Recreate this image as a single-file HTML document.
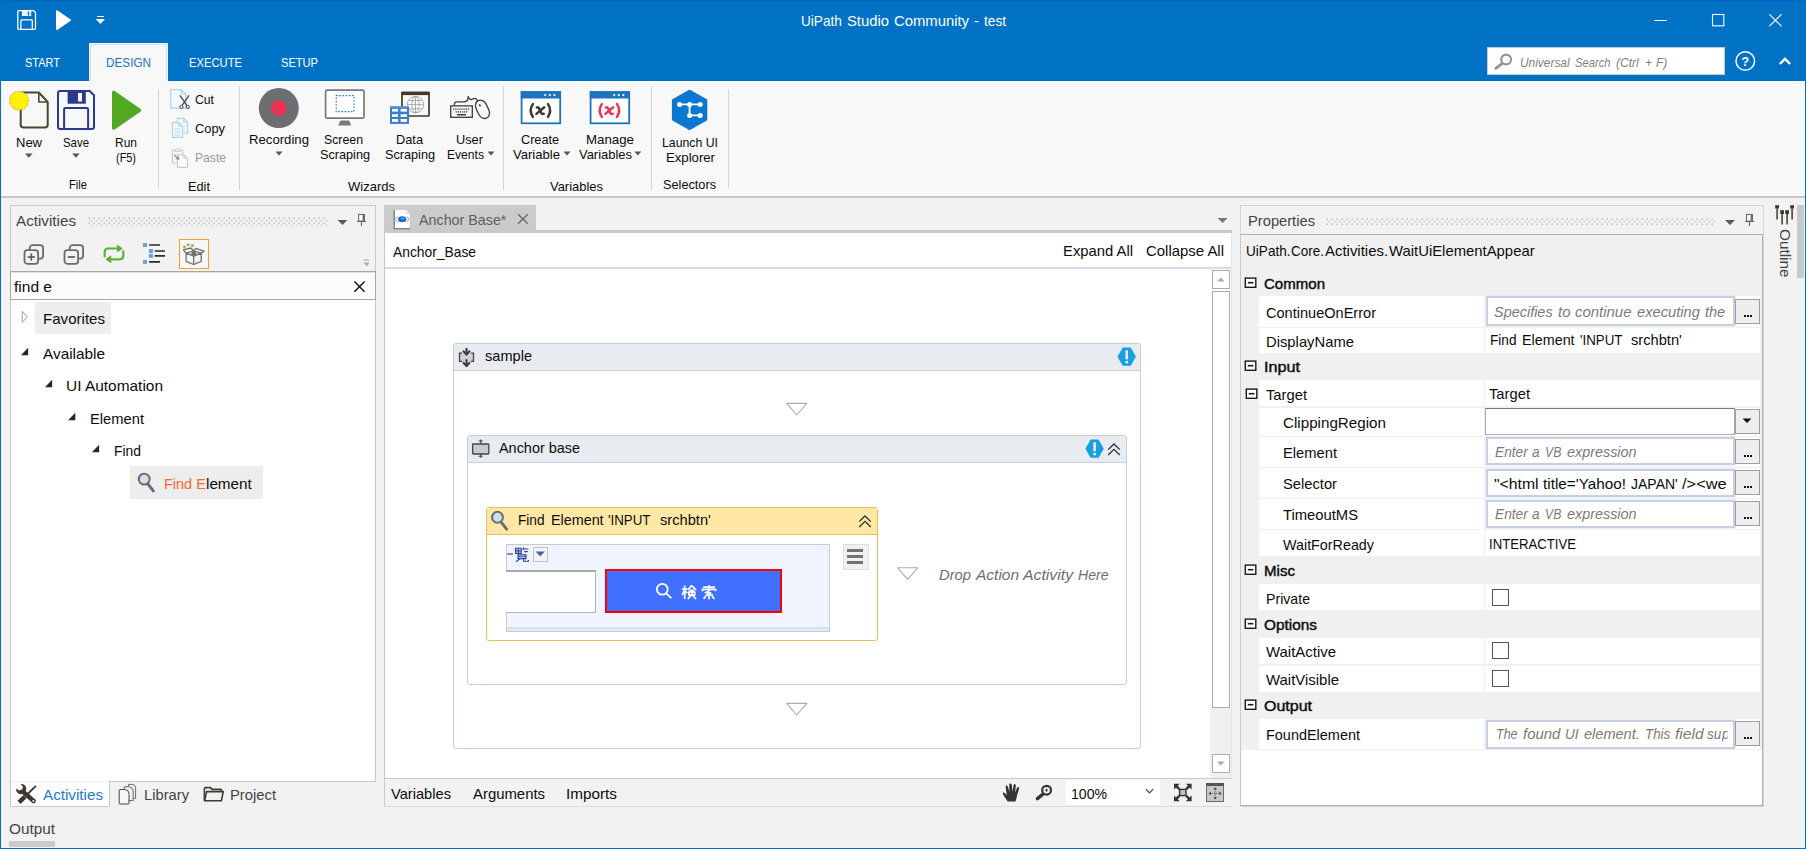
<!DOCTYPE html>
<html><head><meta charset="utf-8"><title>UiPath Studio Community - test</title>
<style>
html,body{margin:0;padding:0;background:#F2F2F2;}
body{width:1806px;height:849px;position:relative;overflow:hidden;font-family:"Liberation Sans",sans-serif;}
#r div{position:absolute;}
#r svg{position:absolute;overflow:visible;}
.t{position:absolute;white-space:pre;line-height:1;transform-origin:0 0;}
</style></head>
<body><div id="r">
<div style="left:0px;top:0px;width:1806px;height:849px;background:#F2F2F2"></div>
<div style="left:0px;top:0px;width:1806px;height:81px;background:#0072C6"></div>
<div style="left:0px;top:0px;width:1806px;height:1px;background:#0067B6"></div>
<div style="left:1px;top:81px;width:1804px;height:115px;background:#F8F8F8"></div>
<div style="left:1px;top:196px;width:1804px;height:2px;background:#C4C6C8"></div>
<div style="left:89px;top:43px;width:79px;height:38px;background:#F8F8F8;border:1px solid #F4F8FC;border-bottom:none;box-sizing:border-box;box-shadow:inset 1px 1px 0 #CFE0F0, inset -1px 0 0 #CFE0F0"></div>
<div style="left:0px;top:0px;width:1px;height:849px;background:#0072C6"></div>
<div style="left:1805px;top:0px;width:1px;height:849px;background:#0072C6"></div>
<div style="left:0px;top:848px;width:1806px;height:1px;background:#0072C6"></div>
<div style="left:1487px;top:47px;width:238px;height:28px;background:#fff;border:1px solid #C8C8C8;box-sizing:border-box"></div>
<div style="left:158px;top:89px;width:1px;height:99px;background:#D4D4D4"></div>
<div style="left:239px;top:86px;width:1px;height:104px;background:#D4D4D4"></div>
<div style="left:503px;top:86px;width:1px;height:104px;background:#D4D4D4"></div>
<div style="left:651px;top:86px;width:1px;height:104px;background:#D4D4D4"></div>
<div style="left:728px;top:89px;width:1px;height:99px;background:#D4D4D4"></div>
<div style="left:10px;top:205px;width:366px;height:577px;background:#F2F2F2;border:1px solid #C9C9C9;box-sizing:border-box"></div>
<div style="left:11px;top:300px;width:364px;height:481px;background:#fff"></div>
<div style="left:10px;top:271px;width:366px;height:29px;background:#FCFCFC;border:1px solid #A6A6A6;box-sizing:border-box;box-shadow:inset 0 0.5px 0 #C4C4C4"></div>
<div style="left:35px;top:302px;width:76px;height:32px;background:#EEEEEE"></div>
<div style="left:130px;top:466px;width:133px;height:33px;background:#EDEDED"></div>
<div style="left:179px;top:239px;width:30px;height:30px;background:#F6F6F6;border:1px solid #F0A030;box-sizing:border-box"></div>
<div style="left:10px;top:782px;width:100px;height:25px;background:#fff;border:1px solid #C9C9C9;border-top:none;box-sizing:border-box"></div>
<div style="left:11px;top:781px;width:98px;height:1px;background:#F0F0F0"></div>
<div style="left:9px;top:841px;width:46px;height:6px;background:#CCCCCC"></div>
<div style="left:384px;top:205px;width:152px;height:26px;background:#CBCBCB"></div>
<div style="left:384px;top:230px;width:848px;height:3px;background:#C9C9C9"></div>
<div style="left:384px;top:233px;width:848px;height:546px;background:#fff;border-left:1px solid #C9C9C9;border-right:1px solid #E4E4E4;box-sizing:border-box"></div>
<div style="left:385px;top:267px;width:846px;height:2px;background:#D5DDEB"></div>
<div style="left:1210px;top:708px;width:21px;height:70px;background:#F0F0F0"></div>
<div style="left:1212px;top:270px;width:18px;height:19px;background:#fff;border:1px solid #ABABAB;box-sizing:border-box"></div>
<div style="left:1212px;top:291px;width:18px;height:417px;background:#fff;border:1px solid #ABABAB;box-sizing:border-box"></div>
<div style="left:1212px;top:754px;width:18px;height:19px;background:#fff;border:1px solid #ABABAB;box-sizing:border-box"></div>
<div style="left:384px;top:778px;width:848px;height:29px;background:#F2F2F2;border-top:1px solid #C9C9C9;border-left:1px solid #C9C9C9;border-bottom:1px solid #DADADA;box-sizing:border-box"></div>
<div style="left:1066px;top:780px;width:94px;height:25px;background:#fff"></div>
<div style="left:1206px;top:783px;width:18px;height:19px;background:#C8C8C8;border:1px solid #6A6A6A;box-sizing:border-box"></div>
<div style="left:453px;top:343px;width:688px;height:406px;background:#fff;border:1px solid #C6CFDF;border-radius:3px;box-sizing:border-box"></div>
<div style="left:454px;top:344px;width:686px;height:27px;background:#E8EBEF;border-bottom:1px solid #C6CFDF;box-sizing:border-box;border-radius:2px 2px 0 0"></div>
<div style="left:467px;top:435px;width:660px;height:250px;background:#fff;border:1px solid #C6CFDF;border-radius:3px;box-sizing:border-box"></div>
<div style="left:468px;top:436px;width:658px;height:27px;background:#E8EBEF;border-bottom:1px solid #C6CFDF;box-sizing:border-box;border-radius:2px 2px 0 0"></div>
<div style="left:486px;top:507px;width:392px;height:134px;background:#fff;border:1px solid #E9BE5C;border-radius:3px;box-sizing:border-box"></div>
<div style="left:487px;top:508px;width:390px;height:27px;background:#FFE8A6;border-bottom:1px solid #E9BE5C;box-sizing:border-box;border-radius:2px 2px 0 0"></div>
<div style="left:506px;top:544px;width:324px;height:88px;background:#F0F4FF;border:1px solid #C9C9C9;box-sizing:border-box"></div>
<div style="left:507px;top:627px;width:322px;height:4px;background:linear-gradient(#D4DEF4,#E6ECFA)"></div>
<div style="left:506px;top:570px;width:90px;height:43px;background:#fff;border:1px solid #B4B4B4;border-left:none;border-top:2px solid #A8A8A8;box-sizing:border-box"></div>
<div style="left:605px;top:569px;width:177px;height:44px;background:#4070FF;border:2px solid #FF0000;box-sizing:border-box"></div>
<div style="left:533px;top:547px;width:15px;height:15px;background:#F4F4F4;border:1px solid #C0C0C0;box-sizing:border-box"></div>
<div style="left:843px;top:544px;width:26px;height:26px;background:#F0F0F0;border:1px solid #DEDEDE;box-sizing:border-box"></div>
<div style="left:847px;top:549px;width:16px;height:3px;background:#727272"></div>
<div style="left:847px;top:555px;width:16px;height:3px;background:#727272"></div>
<div style="left:847px;top:561px;width:16px;height:3px;background:#727272"></div>
<div style="left:1240px;top:205px;width:524px;height:602px;background:#F2F2F2;border:1px solid #D4D4D4;box-sizing:border-box"></div>
<div style="left:1240px;top:234px;width:523px;height:572px;background:#F0F0F0;border:1px solid #B2B2B2;border-left-color:#C9C9C9;box-sizing:border-box"></div>
<div style="left:1241px;top:750px;width:521px;height:55px;background:#fff"></div>
<div style="left:1259px;top:296px;width:225px;height:31px;background:#fff"></div>
<div style="left:1485px;top:296px;width:275px;height:31px;background:#fff"></div>
<div style="left:1259px;top:328px;width:225px;height:25px;background:#fff"></div>
<div style="left:1485px;top:328px;width:275px;height:25px;background:#fff"></div>
<div style="left:1259px;top:380px;width:225px;height:26px;background:#fff"></div>
<div style="left:1485px;top:380px;width:275px;height:26px;background:#fff"></div>
<div style="left:1259px;top:408px;width:225px;height:28px;background:#fff"></div>
<div style="left:1485px;top:408px;width:275px;height:28px;background:#fff"></div>
<div style="left:1259px;top:437px;width:225px;height:30px;background:#fff"></div>
<div style="left:1485px;top:437px;width:275px;height:30px;background:#fff"></div>
<div style="left:1259px;top:468px;width:225px;height:30px;background:#fff"></div>
<div style="left:1485px;top:468px;width:275px;height:30px;background:#fff"></div>
<div style="left:1259px;top:499px;width:225px;height:30px;background:#fff"></div>
<div style="left:1485px;top:499px;width:275px;height:30px;background:#fff"></div>
<div style="left:1259px;top:530px;width:225px;height:26px;background:#fff"></div>
<div style="left:1485px;top:530px;width:275px;height:26px;background:#fff"></div>
<div style="left:1259px;top:584px;width:225px;height:26px;background:#fff"></div>
<div style="left:1485px;top:584px;width:275px;height:26px;background:#fff"></div>
<div style="left:1259px;top:638px;width:225px;height:26px;background:#fff"></div>
<div style="left:1485px;top:638px;width:275px;height:26px;background:#fff"></div>
<div style="left:1259px;top:666px;width:225px;height:26px;background:#fff"></div>
<div style="left:1485px;top:666px;width:275px;height:26px;background:#fff"></div>
<div style="left:1259px;top:719px;width:225px;height:30px;background:#fff"></div>
<div style="left:1485px;top:719px;width:275px;height:30px;background:#fff"></div>
<div style="left:1486px;top:296px;width:249px;height:30px;background:#fff;border:2px solid #C6D0E3;box-sizing:border-box;box-shadow:0 0 0 0.5px #DDE3EF"></div>
<div style="left:1735px;top:299px;width:25px;height:25px;background:#EEEEEE;border:1px solid #9E9E9E;box-sizing:border-box"></div>
<div style="left:1743.6px;top:314.6px;width:2.2px;height:2.2px;background:#111"></div>
<div style="left:1746.8px;top:314.6px;width:2.2px;height:2.2px;background:#111"></div>
<div style="left:1750.0px;top:314.6px;width:2.2px;height:2.2px;background:#111"></div>
<div style="left:1486px;top:437px;width:249px;height:28px;background:#fff;border:2px solid #C6D0E3;box-sizing:border-box;box-shadow:0 0 0 0.5px #DDE3EF"></div>
<div style="left:1735px;top:439px;width:25px;height:25px;background:#EEEEEE;border:1px solid #9E9E9E;box-sizing:border-box"></div>
<div style="left:1743.6px;top:454.6px;width:2.2px;height:2.2px;background:#111"></div>
<div style="left:1746.8px;top:454.6px;width:2.2px;height:2.2px;background:#111"></div>
<div style="left:1750.0px;top:454.6px;width:2.2px;height:2.2px;background:#111"></div>
<div style="left:1486px;top:469px;width:249px;height:28px;background:#fff;border:2px solid #C6D0E3;box-sizing:border-box;box-shadow:0 0 0 0.5px #DDE3EF"></div>
<div style="left:1735px;top:470px;width:25px;height:25px;background:#EEEEEE;border:1px solid #9E9E9E;box-sizing:border-box"></div>
<div style="left:1743.6px;top:485.6px;width:2.2px;height:2.2px;background:#111"></div>
<div style="left:1746.8px;top:485.6px;width:2.2px;height:2.2px;background:#111"></div>
<div style="left:1750.0px;top:485.6px;width:2.2px;height:2.2px;background:#111"></div>
<div style="left:1486px;top:500px;width:249px;height:28px;background:#fff;border:2px solid #C6D0E3;box-sizing:border-box;box-shadow:0 0 0 0.5px #DDE3EF"></div>
<div style="left:1735px;top:501px;width:25px;height:25px;background:#EEEEEE;border:1px solid #9E9E9E;box-sizing:border-box"></div>
<div style="left:1743.6px;top:516.6px;width:2.2px;height:2.2px;background:#111"></div>
<div style="left:1746.8px;top:516.6px;width:2.2px;height:2.2px;background:#111"></div>
<div style="left:1750.0px;top:516.6px;width:2.2px;height:2.2px;background:#111"></div>
<div style="left:1486px;top:720px;width:249px;height:29px;background:#fff;border:2px solid #C6D0E3;box-sizing:border-box;box-shadow:0 0 0 0.5px #DDE3EF"></div>
<div style="left:1735px;top:721px;width:25px;height:25px;background:#EEEEEE;border:1px solid #9E9E9E;box-sizing:border-box"></div>
<div style="left:1743.6px;top:736.6px;width:2.2px;height:2.2px;background:#111"></div>
<div style="left:1746.8px;top:736.6px;width:2.2px;height:2.2px;background:#111"></div>
<div style="left:1750.0px;top:736.6px;width:2.2px;height:2.2px;background:#111"></div>
<div style="left:1485px;top:408px;width:250px;height:27px;background:#fff;border:1px solid #ABABAB;border-top-color:#7A7A7A;box-sizing:border-box"></div>
<div style="left:1735px;top:409px;width:25px;height:25px;background:#EEEEEE;border:1px solid #9E9E9E;box-sizing:border-box"></div>
<div style="left:1492px;top:589px;width:17px;height:17px;background:#fff;border:1px solid #555;box-sizing:border-box"></div>
<div style="left:1492px;top:642px;width:17px;height:17px;background:#fff;border:1px solid #555;box-sizing:border-box"></div>
<div style="left:1492px;top:670px;width:17px;height:17px;background:#fff;border:1px solid #555;box-sizing:border-box"></div>
<div style="left:1797px;top:205px;width:7px;height:73px;background:#C9C9C9"></div>
<svg style="left:16px;top:9px" width="22" height="22" viewBox="0 0 22 22" ><path d="M2.9 1.7H17.6L19.5 3.6V19.2Q19.5 20.3 18.4 20.3H2.9Q1.8 20.3 1.8 19.2V2.8Q1.8 1.7 2.9 1.7Z" fill="none" stroke="#fff" stroke-width="1.3"/><path d="M5.9 2H15.2V7H5.9Z" fill="#fff" fill-opacity="0.92"/><path d="M11.8 2.4H13.2V6.6H11.8Z" fill="#0072C6"/><path d="M4.9 20.2V11.6Q4.9 10.9 5.6 10.9H15.6Q16.3 10.9 16.3 11.6V20.2" fill="none" stroke="#fff" stroke-width="1.3"/></svg>
<svg style="left:55px;top:9px" width="18" height="22" viewBox="0 0 18 22" ><path d="M1 2.4Q1 0.6 2.6 1.4L15.4 10.2Q16.4 11.1 15.4 12L2.6 20.8Q1 21.6 1 19.8Z" fill="#fff"/></svg>
<div style="left:97px;top:16px;width:7px;height:1px;background:#fff"></div>
<svg style="left:95px;top:18px" width="11" height="7" viewBox="0 0 11 7" ><path d="M0.8 0.9H10L5.4 5.9Z" fill="#fff"/></svg>
<div style="left:1654px;top:20px;width:13px;height:1px;background:#fff"></div>
<svg style="left:1711px;top:13px" width="14" height="14" viewBox="0 0 14 14" ><rect x="1.5" y="1.5" width="11.3" height="11.3" fill="none" stroke="#fff" stroke-width="1.1"/></svg>
<svg style="left:1768px;top:13px" width="15" height="15" viewBox="0 0 15 15" ><path d="M1.2 1.2L13.6 13.4M13.6 1.2L1.2 13.4" stroke="#fff" stroke-width="1.15" fill="none"/></svg>
<svg style="left:1493px;top:53px" width="20" height="18" viewBox="0 0 20 18" ><circle cx="13.1" cy="6.5" r="4.9" fill="none" stroke="#929292" stroke-width="2.1"/><path d="M9.2 10.4L2.8 15.4" stroke="#929292" stroke-width="2.7" stroke-linecap="round"/></svg>
<svg style="left:1734px;top:50px" width="22" height="22" viewBox="0 0 22 22" ><circle cx="11.3" cy="11" r="9.3" fill="none" stroke="#fff" stroke-width="1.5"/><text x="11.3" y="15.6" text-anchor="middle" font-family="Liberation Sans" font-weight="bold" font-size="13" fill="#fff">?</text></svg>
<svg style="left:1778px;top:56px" width="14" height="10" viewBox="0 0 14 10" ><path d="M1.8 8L7 2.8L12.2 8" fill="none" stroke="#fff" stroke-width="2.4"/></svg>
<svg style="left:8px;top:88px" width="42" height="42" viewBox="0 0 42 42" ><path d="M12.7 4.5H30.8L39.7 14V36.8Q39.7 39.6 36.9 39.6H15.5Q12.7 39.6 12.7 36.8Z" fill="#F8F8F8" stroke="#4B4632" stroke-width="2" stroke-linejoin="round"/><path d="M30.8 4.5V14H39.7" fill="none" stroke="#4B4632" stroke-width="1.6" stroke-linejoin="round"/><circle cx="11" cy="12.7" r="9.3" fill="#FFF200" stroke="#F5A623" stroke-width="1.3" stroke-dasharray="1.5 1.1"/><circle cx="11" cy="12.7" r="8.7" fill="#FFF200"/></svg>
<svg style="left:25px;top:153px" width="8.6" height="5.2" viewBox="0 0 8.6 5.2" ><g transform="translate(0.0 0.5)"><path d="M0 0H7.6L3.8 4.2Z" fill="#555"/></g></svg>
<svg style="left:56px;top:89px" width="40" height="42" viewBox="0 0 40 42" ><path d="M4.2 2H33.6L38 6.2V37.8Q38 40 35.8 40H4.2Q2 40 2 37.8V4.2Q2 2 4.2 2Z" fill="#F8F8F8" stroke="#2B3990" stroke-width="2"/><path d="M11.6 1.4H29.8V14.7H11.6Z" fill="#2B3990"/><path d="M22 4H26V12.5H22Z" fill="#F8F8F8"/><path d="M8.1 40V20.2Q8.1 19 9.3 19H30.9Q32.1 19 32.1 20.2V40" fill="none" stroke="#2B3990" stroke-width="2"/></svg>
<svg style="left:72px;top:153px" width="8.6" height="5.2" viewBox="0 0 8.6 5.2" ><g transform="translate(0.1 0.5)"><path d="M0 0H7.6L3.8 4.2Z" fill="#555"/></g></svg>
<svg style="left:111px;top:89px" width="32" height="43" viewBox="0 0 32 43" ><path d="M1 4Q1 0.4 4 2.2L29 19.4Q31.4 21.2 29 23L4 40.2Q1 42 1 38.6Z" fill="#52A821"/></svg>
<svg style="left:169px;top:88px" width="22" height="22" viewBox="0 0 22 22" ><path d="M1.7 1.7H12.2L16.7 6V20.2H1.7Z" fill="#F3F9FC" stroke="#A9D6EA" stroke-width="1.2" stroke-linejoin="round"/><path d="M12.2 1.7V6H16.7" fill="none" stroke="#A9D6EA" stroke-width="1"/><path d="M11 7.4L18 17.6M20 7.4L13 17.6" stroke="#4A4A4A" stroke-width="1.35" fill="none"/><circle cx="12.4" cy="19" r="1.6" fill="#F8F8F8" stroke="#4A4A4A" stroke-width="1"/><circle cx="18.8" cy="19" r="1.6" fill="#F8F8F8" stroke="#4A4A4A" stroke-width="1"/></svg>
<svg style="left:170px;top:117px" width="20" height="22" viewBox="0 0 20 22" ><g fill="#F3F9FC" stroke="#A9D6EA" stroke-width="1.1" stroke-linejoin="round"><path d="M7.2 1.4H13.8L17.6 5V16.2H7.2Z"/><path d="M13.8 1.4V5H17.6" fill="none"/><path d="M2.4 5.6H9L12.6 9.2V20.4H2.4Z"/><path d="M9 5.6V9.2H12.6" fill="none"/></g><path d="M4.4 11.6H10.6M4.4 13.9H10.6M4.4 16.2H10.6M4.4 18.4H10.6" stroke="#BFE0EF" stroke-width="0.9"/><path d="M14.4 8.4H15.8M14.4 10.6H15.8M14.4 12.8H15.8" stroke="#CFE7F2" stroke-width="0.8"/></svg>
<svg style="left:170px;top:147px" width="20" height="22" viewBox="0 0 20 22" ><g fill="none" stroke="#C6C6C6" stroke-width="1"><path d="M4.8 3H2.4V16H6.6M10.4 3H12.8V7"/><path d="M4.8 4.4V2.6H6Q7.6 0.6 9.2 2.6H10.4V4.4Z"/><path d="M7.4 7.8H14L17.6 11.2V20.4H7.4Z" fill="#FAFAFA"/><path d="M14 7.8V11.2H17.6"/></g><path d="M4 7.6L8 11.6" stroke="#8C8C8C" stroke-width="1.3" fill="none"/><path d="M9.4 12.8L5.6 12.2L8.8 9Z" fill="#8C8C8C"/></svg>
<svg style="left:258px;top:87px" width="43" height="43" viewBox="0 0 43 43" ><g transform="translate(0 0.5)"><circle cx="20.8" cy="20.6" r="20" fill="#6D6E71"/><circle cx="20.8" cy="20.6" r="7.8" fill="#EB3352"/></g></svg>
<svg style="left:275px;top:151px" width="8" height="5" viewBox="0 0 8 5" ><g transform="translate(0.5 0.6)"><path d="M0 0H7L3.5 4Z" fill="#555"/></g></svg>
<svg style="left:323px;top:88px" width="44" height="40" viewBox="0 0 44 40" ><rect x="2.6" y="2.2" width="38.4" height="28" rx="1.5" fill="#fff" stroke="#77787B" stroke-width="1.7"/><path d="M17.4 32.4H26.2L28.2 37.4H15.2Z" fill="#77787B"/><rect x="13.2" y="7.6" width="17.8" height="16" fill="none" stroke="#1E7ACB" stroke-width="1.1" stroke-dasharray="1.6 1.6"/></svg>
<svg style="left:388px;top:90px" width="44" height="36" viewBox="0 0 44 36" ><rect x="14" y="2.6" width="27" height="23.4" rx="0.8" fill="#F8F8F8" stroke="#3F3925" stroke-width="1.7"/><path d="M13.2 3.4H41.8" stroke="#3F3925" stroke-width="3.4"/><g fill="#fff" stroke="#9A9A9A" stroke-width="0.8"><circle cx="27.5" cy="14.6" r="8.2"/><ellipse cx="27.5" cy="14.6" rx="3.6" ry="8.2" fill="none"/><path d="M19.3 14.6H35.7M27.5 6.4V22.8M20.6 10.4H34.4M20.6 18.8H34.4" fill="none"/></g><rect x="2" y="16.3" width="19" height="17.6" fill="#3B7CCB"/><rect x="2" y="16.3" width="19" height="1.4" fill="#62A0E4"/><g fill="#fff"><rect x="4" y="18.9" width="6.1" height="2.7"/><rect x="12.6" y="18.9" width="6.3" height="2.7"/><rect x="4" y="24.2" width="6.1" height="2.7"/><rect x="12.6" y="24.2" width="6.3" height="2.7"/><rect x="4" y="29" width="6.1" height="2.9"/><rect x="12.6" y="29" width="6.3" height="2.9"/></g></svg>
<svg style="left:448px;top:94px" width="46" height="28" viewBox="0 0 46 28" ><g fill="none" stroke="#3A3A3A" stroke-width="1.3"><rect x="2.7" y="11.9" width="21.6" height="11.4" fill="#F8F8F8"/><path d="M6.4 11.6V10.2Q6.4 7.8 9 7.8H16Q19.6 7.8 20 4.4L20.2 2.2Q20.6 4.6 21.8 5.2Q23.4 6 25 4.8Q27.4 3.6 28.6 5.4L29.8 7"/><rect x="29" y="5.6" width="11" height="19.4" rx="5.5" ry="6.6" transform="rotate(-26 34.5 15.3)" fill="#F8F8F8"/><path d="M31.4 10.2L32.4 12.4" stroke-width="1.5"/></g><path d="M5 15.2H22" stroke="#3A3A3A" stroke-width="1.3" stroke-dasharray="1.3 0.8" fill="none"/><path d="M7.6 17.9H19.8" stroke="#3A3A3A" stroke-width="1.3" stroke-dasharray="1.3 0.8" fill="none"/><path d="M9 20.7H18" stroke="#3A3A3A" stroke-width="1.5" fill="none"/></svg>
<svg style="left:487px;top:151px" width="8" height="5" viewBox="0 0 8 5" ><g transform="translate(0.5 0.6)"><path d="M0 0H7L3.5 4Z" fill="#555"/></g></svg>
<svg style="left:520px;top:90px" width="43" height="36" viewBox="0 0 43 36" ><g transform="translate(0 0.5)"><rect x="1.6" y="1.6" width="38.6" height="31.2" fill="#fff" stroke="#1E73BE" stroke-width="1.8"/><rect x="0.8" y="0.8" width="40.2" height="7.2" fill="#1E73BE"/><circle cx="25.2" cy="4.6" r="1.1" fill="#fff"/><circle cx="29.8" cy="4.6" r="1.1" fill="#fff"/><circle cx="34.4" cy="4.6" r="1.1" fill="#fff"/><g fill="none" stroke="#3E3A2E" stroke-width="2.5" stroke-linecap="round"><path d="M12.8 13.6Q8.6 20 12.8 26.4"/><path d="M28 13.6Q32.2 20 28 26.4"/><path d="M16.8 17Q18.2 16.2 19 17.6L21.4 22.6Q22.2 24 23.8 23.2"/><path d="M24.2 16.8L16.4 23.4"/></g></g></svg>
<svg style="left:563px;top:151px" width="8" height="5" viewBox="0 0 8 5" ><g transform="translate(0.5 0.6)"><path d="M0 0H7L3.5 4Z" fill="#555"/></g></svg>
<svg style="left:589px;top:90px" width="43" height="36" viewBox="0 0 43 36" ><g transform="translate(0 0.5)"><rect x="1.6" y="1.6" width="38.6" height="31.2" fill="#fff" stroke="#1E73BE" stroke-width="1.8"/><rect x="0.8" y="0.8" width="40.2" height="7.2" fill="#1E73BE"/><circle cx="25.2" cy="4.6" r="1.1" fill="#fff"/><circle cx="29.8" cy="4.6" r="1.1" fill="#fff"/><circle cx="34.4" cy="4.6" r="1.1" fill="#fff"/><g fill="none" stroke="#EB3352" stroke-width="2.5" stroke-linecap="round"><path d="M12.8 13.6Q8.6 20 12.8 26.4"/><path d="M28 13.6Q32.2 20 28 26.4"/><path d="M16.8 17Q18.2 16.2 19 17.6L21.4 22.6Q22.2 24 23.8 23.2"/><path d="M24.2 16.8L16.4 23.4"/></g></g></svg>
<svg style="left:634px;top:151px" width="8" height="5" viewBox="0 0 8 5" ><g transform="translate(0.3 0.6)"><path d="M0 0H7L3.5 4Z" fill="#555"/></g></svg>
<svg style="left:669px;top:88px" width="42" height="44" viewBox="0 0 42 44" ><path d="M20.6 3.4L36.6 12.4V31.2L20.6 40.2L4.6 31.2V12.4Z" fill="#0B77D0" stroke="#0B77D0" stroke-width="3.4" stroke-linejoin="round"/><path d="M10.6 16.4H31.2M20.6 16.4V27.4H31.2" stroke="#fff" stroke-width="1.9" fill="none"/><g fill="#fff"><circle cx="10.6" cy="16.4" r="2.5"/><circle cx="20.6" cy="16.4" r="2.5"/><circle cx="31.2" cy="16.4" r="2.5"/><circle cx="20.6" cy="27.4" r="2.5"/><circle cx="31.2" cy="27.4" r="2.5"/></g></svg>
<div style="left:87.5px;top:217px;width:240px;height:9px;background:radial-gradient(circle at 1.25px 1.25px,#C4C4C4 0.55px,transparent 1.25px) 0 0/5px 5px,radial-gradient(circle at 1.25px 1.25px,#C4C4C4 0.55px,transparent 1.25px) 2.5px 2.5px/5px 5px"></div>
<svg style="left:337px;top:219px" width="11" height="6" viewBox="0 0 11 6" ><g transform="translate(0.5 0.9)"><path d="M0 0H10L5.0 5Z" fill="#5A5A5A"/></g></svg>
<svg style="left:357px;top:214px" width="10" height="12.5" viewBox="0 0 10 12.5" ><rect x="1.6" y="0.5" width="5.8" height="6.6" fill="#fff" stroke="#6A6A6A" stroke-width="1.1"/><rect x="5.6" y="0.4" width="2.4" height="6.8" fill="#6A6A6A"/><path d="M0 7.5H9.2M4.5 7.5V12" stroke="#6A6A6A" stroke-width="1.2" fill="none"/></svg>
<svg style="left:23px;top:244px" width="22" height="22" viewBox="0 0 22 22" ><g transform="translate(0.5 0)"><g fill="#F2F2F2" stroke="#6A6A6A" stroke-width="1.8"><rect x="6.2" y="1.2" width="13.4" height="13.4" rx="2.8"/><rect x="1" y="6.2" width="13.6" height="13.6" rx="2.8"/></g><path d="M4.2 13H11.4" stroke="#5A5A5A" stroke-width="1.7"/><path d="M7.8 9.4V16.6" stroke="#5A5A5A" stroke-width="1.7"/></g></svg>
<svg style="left:63px;top:244px" width="22" height="22" viewBox="0 0 22 22" ><g transform="translate(0.5 0)"><g fill="#F2F2F2" stroke="#6A6A6A" stroke-width="1.8"><rect x="6.2" y="1.2" width="13.4" height="13.4" rx="2.8"/><rect x="1" y="6.2" width="13.6" height="13.6" rx="2.8"/></g><path d="M4.2 13H11.4" stroke="#5A5A5A" stroke-width="1.7"/></g></svg>
<svg style="left:102px;top:243px" width="24" height="21" viewBox="0 0 24 21" ><g fill="none" stroke="#5DB135" stroke-width="2.2" stroke-linejoin="round" stroke-linecap="round"><path d="M2.7 13.4V9Q2.7 5.5 6.2 5.5H16"/><path d="M21.3 8.4V12.8Q21.3 16.3 17.8 16.3H8.6"/></g><path d="M15.4 2.2L20.2 5.5L15.4 8.8Z" fill="#5DB135" stroke="#5DB135" stroke-width="1" stroke-linejoin="round"/><path d="M8.8 13L4 16.3L8.8 19.6Z" fill="#5DB135" stroke="#5DB135" stroke-width="1" stroke-linejoin="round"/></svg>
<svg style="left:142px;top:242px" width="24" height="23" viewBox="0 0 24 23" ><g fill="#6AA0EA"><rect x="1" y="1" width="4" height="4"/><rect x="6.9" y="7" width="4" height="4"/><rect x="6.9" y="11.9" width="4" height="4"/><rect x="1" y="17.9" width="4" height="4"/></g><path d="M7.1 3H18M12.7 9H23M12.7 13.9H23M7.1 19.9H18" stroke="#2A2A2A" stroke-width="1.7"/></svg>
<svg style="left:182px;top:241px" width="24" height="25" viewBox="0 0 24 25" ><g fill="none" stroke="#707070" stroke-width="1.3" stroke-linejoin="round"><path d="M4.1 12.2V20.3L11.7 23.5L19.2 20.3V12.2L11.7 15.1Z" fill="#F6F6F6"/><path d="M11.7 15.1V23.5"/><path d="M4.1 12.2L1.4 8.8L8.8 7L11.7 9.8L4.1 12.2M11.7 9.8L13.6 7.4L22 10.2L19.2 12.2L11.7 9.8"/></g><path d="M11.7 9.8L8.6 12.9L11.7 14.6L15.2 12.9Z" fill="#6A6A6A"/><g fill="#86C440"><circle cx="2.5" cy="6" r="1.5"/><circle cx="6.1" cy="3.7" r="1.5"/><circle cx="10.4" cy="4.4" r="1.5"/></g></svg>
<svg style="left:363px;top:259px" width="8" height="9" viewBox="0 0 8 9" ><path d="M0.8 1H6.4" stroke="#ABABAB" stroke-width="1.1"/><path d="M0.6 3.4H6.6L3.6 7.6Z" fill="#ABABAB"/></svg>
<svg style="left:353px;top:281px" width="13" height="12" viewBox="0 0 13 12" ><path d="M1.4 0.5L11.6 10.7M11.6 0.5L1.4 10.7" stroke="#111" stroke-width="1.4" fill="none"/></svg>
<svg style="left:21px;top:310px" width="8" height="14" viewBox="0 0 8 14" ><path d="M1.2 1.4L6.2 6.9L1.2 12.4Z" fill="#fff" stroke="#9A9A9A" stroke-width="1"/></svg>
<svg style="left:20px;top:347px" width="9" height="9.5" viewBox="0 0 9 9.5" ><g transform="translate(0.5 0.3)"><path d="M7.6 0.4V8H0.4Z" fill="#262626"/></g></svg>
<svg style="left:44px;top:379px" width="9" height="9.5" viewBox="0 0 9 9.5" ><g transform="translate(0.5 0.3)"><path d="M7.6 0.4V8H0.4Z" fill="#262626"/></g></svg>
<svg style="left:67px;top:412px" width="9" height="9.5" viewBox="0 0 9 9.5" ><g transform="translate(0.7 0.3)"><path d="M7.6 0.4V8H0.4Z" fill="#262626"/></g></svg>
<svg style="left:91px;top:444px" width="9" height="9.5" viewBox="0 0 9 9.5" ><g transform="translate(0.5 0.3)"><path d="M7.6 0.4V8H0.4Z" fill="#262626"/></g></svg>
<svg style="left:137px;top:472px" width="21" height="22" viewBox="0 0 21 22" ><g transform="translate(0 0.3)"><path d="M11.3 12.2L16.3 18.6" stroke="#686B72" stroke-width="2.9" stroke-linecap="round"/><circle cx="7.2" cy="6.8" r="5.45" fill="#CCE3EE" stroke="#6A6D73" stroke-width="2"/></g></svg>
<svg style="left:15px;top:783px" width="23" height="23" viewBox="0 0 23 23" ><g stroke="#3E3A2E" fill="none"><path d="M8 8.6L18.6 18" stroke-width="4.6" stroke-linecap="round"/><path d="M20.4 3.4L12.6 11" stroke-width="1.9" stroke-linecap="round"/><path d="M10 13.6L4 19.4" stroke-width="4.4"/></g><path d="M1.4 5.6Q0.6 9 3.4 10.6Q6.4 12 9 10L10.6 8.2Q12 5.6 10.6 3.2Q8.8 0.4 5.6 1.2L8 3.8L7.2 6.6L4.2 7.6Z" fill="#3E3A2E"/><circle cx="18.4" cy="17.9" r="1" fill="#fff"/></svg>
<svg style="left:118px;top:783px" width="19" height="22" viewBox="0 0 19 22" ><g fill="#F2F2F2" stroke="#666" stroke-width="1" stroke-linejoin="round"><path d="M10.4 1.4H14.6Q17.4 2 17.6 4.6V15.4H10.4Z"/><path d="M6.2 3.8H11.4Q14.8 4.4 15.2 7.8V17.6H6.2Z"/><path d="M1.8 6.6H7.6Q10.6 7.2 11 10.4V20.4Q11 21 10.4 21H1.8Q1.2 21 1.2 20.4V7.2Q1.2 6.6 1.8 6.6Z" fill="#F7F7F7" stroke="#444"/></g></svg>
<svg style="left:203px;top:786px" width="22" height="17" viewBox="0 0 22 17" ><path d="M1.4 14.6V2.8Q1.4 1.6 2.6 1.6H7.4L9 3.4H17.4Q18.6 3.4 18.6 4.6V5.4" fill="none" stroke="#3E3A2E" stroke-width="1.6"/><path d="M1.6 14.8L3.6 5.6H20.2L18.4 14.8Z" fill="#F2F2F2" stroke="#3E3A2E" stroke-width="1.6" stroke-linejoin="round"/></svg>
<svg style="left:393px;top:209px" width="18" height="21" viewBox="0 0 18 21" ><path d="M1.6 1H13.2L16.6 4.4V19.4H1.6Z" fill="#fff"/><path d="M1.2 1V19.8H17" fill="none" stroke="#5A5A5A" stroke-width="1"/><path d="M13.2 1V4.4H16.6" fill="none" stroke="#D0D0D0" stroke-width="0.9"/><path d="M4.6 7L2.4 10.2L4.6 13.4M13.6 7L15.8 10.2L13.6 13.4" fill="none" stroke="#BDBDBD" stroke-width="1.1"/><ellipse cx="9.2" cy="10.2" rx="4.2" ry="3" fill="#1767DA"/><ellipse cx="9.8" cy="9.4" rx="2" ry="1.2" fill="#4B94F0"/></svg>
<svg style="left:517px;top:213px" width="12" height="12" viewBox="0 0 12 12" ><path d="M1 1.2L10.8 10.8M10.8 1.2L1 10.8" stroke="#6A6A6A" stroke-width="1.3" fill="none"/></svg>
<svg style="left:1217px;top:218px" width="11" height="6" viewBox="0 0 11 6" ><g transform="translate(0.6 0.1)"><path d="M0 0H10L5.0 5Z" fill="#777"/></g></svg>
<svg style="left:1217px;top:277px" width="8" height="5" viewBox="0 0 8 5" ><path d="M0 4.6L3.8 0.4L7.6 4.6Z" fill="#ABABAB"/></svg>
<svg style="left:1217px;top:761px" width="8" height="5" viewBox="0 0 8 5" ><path d="M0 0.4L3.8 4.6L7.6 0.4Z" fill="#ABABAB"/></svg>
<svg style="left:458px;top:347px" width="18" height="21" viewBox="0 0 18 21" ><rect x="1.6" y="6.4" width="13.8" height="7.8" fill="#D2D2D2"/><path d="M4.2 6.2H1.5V14.4H4.2M12.8 6.2H15.5V14.4H12.8" fill="none" stroke="#444" stroke-width="1.3"/><path d="M8.5 1V7.4M8.5 12.2V18.8" stroke="#3A3A3A" stroke-width="2.1"/><path d="M5 3.8L8.5 7.6L12 3.8M5 15.2L8.5 19L12 15.2" fill="none" stroke="#3A3A3A" stroke-width="2"/></svg>
<svg style="left:1116px;top:346px" width="21" height="21" viewBox="0 0 21 21" ><g transform="translate(0.7 0.7)"><path d="M1.6 10L6.4 1.6H13.6L18.4 10L13.6 18.4H6.4Z" fill="#1B9FE2" stroke="#1B9FE2" stroke-width="1.4" stroke-linejoin="round"/><path d="M10 3.6V12.6" stroke="#fff" stroke-width="2.3"/><path d="M10 14.2V16.6" stroke="#fff" stroke-width="2.3"/></g></svg>
<svg style="left:471px;top:438px" width="20" height="21" viewBox="0 0 20 21" ><rect x="1.6" y="6" width="16.2" height="10" rx="0.8" fill="#C9C9C9" stroke="#444" stroke-width="1.3"/><path d="M9.7 1.6V6M7.6 3H11.8M9.7 16V19.8M7.6 18.2H11.8" stroke="#444" stroke-width="1.1"/></svg>
<svg style="left:1084px;top:438px" width="21" height="21" viewBox="0 0 21 21" ><g transform="translate(0.6 0.7)"><path d="M1.6 10L6.4 1.6H13.6L18.4 10L13.6 18.4H6.4Z" fill="#1B9FE2" stroke="#1B9FE2" stroke-width="1.4" stroke-linejoin="round"/><path d="M10 3.6V12.6" stroke="#fff" stroke-width="2.3"/><path d="M10 14.2V16.6" stroke="#fff" stroke-width="2.3"/></g></svg>
<svg style="left:1107px;top:442px" width="15" height="15" viewBox="0 0 15 15" ><g transform="translate(0 0.2)"><path d="M1.2 7.4L7 1.8L12.8 7.4M1.2 12.8L7 7.2L12.8 12.8" fill="none" stroke="#2A2F3C" stroke-width="1.3"/></g></svg>
<svg style="left:490px;top:510px" width="21" height="22" viewBox="0 0 21 22" ><g transform="translate(0.3 0.5)"><path d="M11.3 12.2L16.3 18.6" stroke="#686B72" stroke-width="2.9" stroke-linecap="round"/><circle cx="7.2" cy="6.8" r="5.45" fill="#CCE3EE" stroke="#6A6D73" stroke-width="2"/></g></svg>
<svg style="left:858px;top:514px" width="15" height="15" viewBox="0 0 15 15" ><g transform="translate(0 0.2)"><path d="M1.2 7.4L7 1.8L12.8 7.4M1.2 12.8L7 7.2L12.8 12.8" fill="none" stroke="#2A2F3C" stroke-width="1.3"/></g></svg>
<svg style="left:785px;top:402px" width="24" height="15" viewBox="0 0 24 15" ><g transform="translate(0.4 0.6)"><path d="M1.2 0.8H21.4L11.3 12.4Z" fill="#fff" stroke="#A4ACBC" stroke-width="1.1" stroke-linejoin="round"/></g></svg>
<svg style="left:896px;top:567px" width="24" height="15" viewBox="0 0 24 15" ><g transform="translate(0.4 0)"><path d="M1.2 0.8H21.4L11.3 12.4Z" fill="#fff" stroke="#A4ACBC" stroke-width="1.1" stroke-linejoin="round"/></g></svg>
<svg style="left:785px;top:702px" width="24" height="15" viewBox="0 0 24 15" ><g transform="translate(0.4 0.6)"><path d="M1.2 0.8H21.4L11.3 12.4Z" fill="#fff" stroke="#A4ACBC" stroke-width="1.1" stroke-linejoin="round"/></g></svg>
<svg style="left:506px;top:547px" width="24" height="16" viewBox="0 0 24 16" ><g fill="none" stroke="#2B3E99" stroke-width="1.15"><path d="M1.2 7H7"/><path d="M9.6 1.2H15.2V6.4H9.6ZM9.6 3.8H15.2M12.4 1.2V6.4"/><path d="M18 0.6L16.6 3M17.6 2H22.4M18.2 4.6H21.8"/><path d="M12 7.8H20V11.6H12ZM12 9.7H20"/><path d="M14.2 11.6L10 14.8M17.6 11.6V14.2H22.4V13"/></g></svg>
<svg style="left:535px;top:551px" width="11" height="6" viewBox="0 0 11 6" ><path d="M0.6 0.6H9.8L5.2 5.4Z" fill="#4A63B0"/></svg>
<svg style="left:654px;top:581px" width="20" height="20" viewBox="0 0 20 20" ><circle cx="8.3" cy="8.3" r="5.4" fill="none" stroke="#fff" stroke-width="1.8"/><path d="M12.2 12.4L16.8 16.6" stroke="#fff" stroke-width="1.9" stroke-linecap="round"/></svg>
<svg style="left:681px;top:585px" width="17" height="16" viewBox="0 0 17 16" ><g transform="translate(0.5 0)"><g fill="none" stroke="#fff" stroke-width="1.7"><path d="M0.4 4.2H6M3.2 0.4V14M3.2 5L0.6 10M3.4 5.6L5.8 8.2"/><path d="M10.2 0.4L6.4 5M10.2 0.6L14.6 5M8 5.4H12.6M7.4 7H13.2V9.8H7.4ZM10.3 7V9.8M10 9.8L6.4 14M10.6 9.8L14.6 14"/></g></g></svg>
<svg style="left:701px;top:585px" width="17" height="16" viewBox="0 0 17 16" ><g transform="translate(0.5 0)"><g fill="none" stroke="#fff" stroke-width="1.7"><path d="M1.6 2.2H13.4M7.5 0.2V4M1 6.2V4.4H14V6.2"/><path d="M8.6 5L4.8 7.4L9.6 7.8L4.2 10.2L11.6 9.8M7.5 10V14.2M4.4 11.2L2 13.8M10.4 11.2L13 13.8"/></g></g></svg>
<svg style="left:1002px;top:783px" width="20" height="20" viewBox="0 0 20 20" ><path d="M5.6 18.6Q3.6 15.4 1 11.2Q0.4 9.6 1.8 9.6Q3 9.8 4.8 12.4L3.6 3.6Q3.6 2.2 4.8 2.4Q5.6 2.6 6 4L7.4 9L7.2 1.6Q7.4 0.4 8.6 0.6Q9.6 0.8 9.8 2L10.4 8.8L11.6 2Q12 0.8 13 1.2Q14 1.6 13.8 3L13 9.6L15.2 4.6Q15.8 3.6 16.8 4.2Q17.4 4.8 17 6L15 12.6Q14.6 16 13.4 18.6Z" fill="#333"/></svg>
<svg style="left:1035px;top:783px" width="20" height="19" viewBox="0 0 20 19" ><path d="M7.8 11.2L2.4 15.6" stroke="#333" stroke-width="3.4" stroke-linecap="round"/><circle cx="11.6" cy="7.2" r="4.4" fill="#F2F2F2" stroke="#333" stroke-width="2.2"/><path d="M10 7.2H13.2M11.6 5.6V8.8" stroke="#333" stroke-width="0.9"/></svg>
<svg style="left:1145px;top:788px" width="10" height="7" viewBox="0 0 10 7" ><path d="M1 1.2L4.6 4.8L8.2 1.2" fill="none" stroke="#444" stroke-width="1.2"/></svg>
<svg style="left:1173px;top:783px" width="20" height="20" viewBox="0 0 20 20" ><rect x="6.6" y="6.4" width="6.4" height="6.2" fill="#C4C4C4" stroke="#333" stroke-width="1.4"/><path d="M6.4 6.2L3 2.8M13.2 6.2L16.6 2.8M6.4 12.8L3 16.2M13.2 12.8L16.6 16.2" stroke="#333" stroke-width="2.4"/><path d="M1 0.8H6.8L1 6.6ZM18.6 0.8H12.8L18.6 6.6ZM1 18.2H6.8L1 12.4ZM18.6 18.2H12.8L18.6 12.4Z" fill="#333"/></svg>
<div style="left:1206px;top:783px;width:18px;height:3px;background:#555"></div>
<svg style="left:1206px;top:783px" width="19" height="19" viewBox="0 0 19 19" ><path d="M9.2 5.6V15.2M4 10.4H14.4" stroke="#555" stroke-width="0.9" stroke-dasharray="1.1 0.9"/><path d="M9.2 4.2L7.4 6.6H11ZM9.2 16.6L7.4 14.2H11ZM2.6 10.4L5 8.6V12.2ZM15.8 10.4L13.4 8.6V12.2Z" fill="#444"/></svg>
<div style="left:1325.5px;top:217.5px;width:389px;height:7.5px;background:radial-gradient(circle at 1.25px 1.25px,#C4C4C4 0.55px,transparent 1.25px) 0 0/5px 5px,radial-gradient(circle at 1.25px 1.25px,#C4C4C4 0.55px,transparent 1.25px) 2.5px 2.5px/5px 5px"></div>
<svg style="left:1725px;top:219px" width="11" height="6" viewBox="0 0 11 6" ><g transform="translate(0.0 0.9)"><path d="M0 0H10L5.0 5Z" fill="#5A5A5A"/></g></svg>
<svg style="left:1745px;top:214px" width="10" height="12.5" viewBox="0 0 10 12.5" ><rect x="1.6" y="0.5" width="5.8" height="6.6" fill="#fff" stroke="#6A6A6A" stroke-width="1.1"/><rect x="5.6" y="0.4" width="2.4" height="6.8" fill="#6A6A6A"/><path d="M0 7.5H9.2M4.5 7.5V12" stroke="#6A6A6A" stroke-width="1.2" fill="none"/></svg>
<svg style="left:1742px;top:418px" width="10" height="5.5" viewBox="0 0 10 5.5" ><g transform="translate(0.5 0.55)"><path d="M0 0H9L4.5 4.5Z" fill="#111"/></g></svg>
<svg style="left:1775px;top:205px" width="20" height="21" viewBox="0 0 20 21" ><g fill="#3E3A2E"><rect x="0.2" y="0.2" width="3.8" height="3.4"/><rect x="15.2" y="0.2" width="3.8" height="3.4"/><rect x="5.2" y="5.2" width="3.8" height="3.8"/><rect x="10.2" y="5.2" width="3.8" height="3.8"/></g><path d="M2.1 3.4V14.6M17.1 3.4V14.6M7.1 9V19.4M12.1 9V19.4" stroke="#3E3A2E" stroke-width="1.5" fill="none"/></svg>
<div style="left:1776px;top:229.4px;width:16px;height:50px;"><span style="position:absolute;left:16px;top:0;transform-origin:0 0;transform:rotate(90deg) scaleX(1.05);font-size:14.6px;line-height:15px;color:#444;white-space:pre">Outline</span></div>
<svg style="left:1244px;top:277px" width="14" height="13" viewBox="0 0 14 13" ><g transform="translate(0.6 0.4)"><rect x="0.7" y="0.7" width="10.5" height="9.2" fill="#fff" stroke="#1A1A1A" stroke-width="1.4"/><path d="M3.2 5.3H8.8" stroke="#1A1A1A" stroke-width="1.6"/></g></svg>
<svg style="left:1244px;top:360px" width="14" height="13" viewBox="0 0 14 13" ><g transform="translate(0.6 0.4)"><rect x="0.7" y="0.7" width="10.5" height="9.2" fill="#fff" stroke="#1A1A1A" stroke-width="1.4"/><path d="M3.2 5.3H8.8" stroke="#1A1A1A" stroke-width="1.6"/></g></svg>
<svg style="left:1245px;top:388px" width="14" height="13" viewBox="0 0 14 13" ><g transform="translate(0.6 0.4)"><rect x="0.7" y="0.7" width="10.5" height="9.2" fill="#fff" stroke="#1A1A1A" stroke-width="1.4"/><path d="M3.2 5.3H8.8" stroke="#1A1A1A" stroke-width="1.6"/></g></svg>
<svg style="left:1244px;top:564px" width="14" height="13" viewBox="0 0 14 13" ><g transform="translate(0.6 0.4)"><rect x="0.7" y="0.7" width="10.5" height="9.2" fill="#fff" stroke="#1A1A1A" stroke-width="1.4"/><path d="M3.2 5.3H8.8" stroke="#1A1A1A" stroke-width="1.6"/></g></svg>
<svg style="left:1244px;top:618px" width="14" height="13" viewBox="0 0 14 13" ><g transform="translate(0.6 0.4)"><rect x="0.7" y="0.7" width="10.5" height="9.2" fill="#fff" stroke="#1A1A1A" stroke-width="1.4"/><path d="M3.2 5.3H8.8" stroke="#1A1A1A" stroke-width="1.6"/></g></svg>
<svg style="left:1244px;top:699px" width="14" height="13" viewBox="0 0 14 13" ><g transform="translate(0.6 0.4)"><rect x="0.7" y="0.7" width="10.5" height="9.2" fill="#fff" stroke="#1A1A1A" stroke-width="1.4"/><path d="M3.2 5.3H8.8" stroke="#1A1A1A" stroke-width="1.6"/></g></svg>
<span class="t" style="left:25.0px;top:57px;font-size:12.8px;color:#fff;transform:scaleX(0.8586);">START</span>
<span class="t" style="left:106.0px;top:57px;font-size:12.8px;color:#1A73C0;transform:scaleX(0.9169);">DESIGN</span>
<span class="t" style="left:189.0px;top:57px;font-size:12.8px;color:#fff;transform:scaleX(0.8767);">EXECUTE</span>
<span class="t" style="left:281.0px;top:57px;font-size:12.8px;color:#fff;transform:scaleX(0.8671);">SETUP</span>
<span class="t" style="left:16.0px;top:137px;font-size:12.8px;color:#0C0C0C;transform:scaleX(1.0153);">New</span>
<span class="t" style="left:63.0px;top:137px;font-size:12.8px;color:#0C0C0C;transform:scaleX(0.8913);">Save</span>
<span class="t" style="left:115.0px;top:137px;font-size:12.8px;color:#0C0C0C;transform:scaleX(0.9368);">Run</span>
<span class="t" style="left:116.0px;top:152px;font-size:12.8px;color:#0C0C0C;transform:scaleX(0.8522);">(F5)</span>
<span class="t" style="left:69.0px;top:179px;font-size:12.8px;color:#0C0C0C;transform:scaleX(0.8727);">File</span>
<span class="t" style="left:195.0px;top:94px;font-size:12.8px;color:#0C0C0C;transform:scaleX(0.9537);">Cut</span>
<span class="t" style="left:195.0px;top:123px;font-size:12.8px;color:#0C0C0C;transform:scaleX(1.0042);">Copy</span>
<span class="t" style="left:195.0px;top:152px;font-size:12.8px;color:#9A9A9A;transform:scaleX(0.9470);">Paste</span>
<span class="t" style="left:188.0px;top:181px;font-size:12.8px;color:#0C0C0C;transform:scaleX(0.9972);">Edit</span>
<span class="t" style="left:249.0px;top:134px;font-size:12.8px;color:#0C0C0C;transform:scaleX(1.0284);">Recording</span>
<span class="t" style="left:324.0px;top:134px;font-size:12.8px;color:#0C0C0C;transform:scaleX(0.9618);">Screen</span>
<span class="t" style="left:320.0px;top:149px;font-size:12.8px;color:#0C0C0C;transform:scaleX(0.9898);">Scraping</span>
<span class="t" style="left:396.0px;top:134px;font-size:12.8px;color:#0C0C0C;transform:scaleX(0.9988);">Data</span>
<span class="t" style="left:385.0px;top:149px;font-size:12.8px;color:#0C0C0C;transform:scaleX(0.9898);">Scraping</span>
<span class="t" style="left:456.0px;top:134px;font-size:12.8px;color:#0C0C0C;transform:scaleX(0.9988);">User</span>
<span class="t" style="left:447.0px;top:149px;font-size:12.8px;color:#0C0C0C;transform:scaleX(0.9457);">Events</span>
<span class="t" style="left:348.0px;top:181px;font-size:12.8px;color:#0C0C0C;transform:scaleX(1.0169);">Wizards</span>
<span class="t" style="left:521.0px;top:134px;font-size:12.8px;color:#0C0C0C;transform:scaleX(0.9890);">Create</span>
<span class="t" style="left:513.0px;top:149px;font-size:12.8px;color:#0C0C0C;transform:scaleX(1.0214);">Variable</span>
<span class="t" style="left:586.0px;top:134px;font-size:12.8px;color:#0C0C0C;transform:scaleX(1.0378);">Manage</span>
<span class="t" style="left:579.0px;top:149px;font-size:12.8px;color:#0C0C0C;transform:scaleX(1.0113);">Variables</span>
<span class="t" style="left:550.0px;top:181px;font-size:12.8px;color:#0C0C0C;transform:scaleX(1.0113);">Variables</span>
<span class="t" style="left:662.0px;top:137px;font-size:12.8px;color:#0C0C0C;transform:scaleX(0.9598);">Launch UI</span>
<span class="t" style="left:666.0px;top:152px;font-size:12.8px;color:#0C0C0C;transform:scaleX(1.0282);">Explorer</span>
<span class="t" style="left:663.0px;top:179px;font-size:12.8px;color:#0C0C0C;transform:scaleX(0.9936);">Selectors</span>
<span class="t" style="left:16.0px;top:214px;font-size:14.6px;color:#444;transform:scaleX(1.0421);">Activities</span>
<span class="t" style="left:14.0px;top:280px;font-size:14.6px;color:#0C0C0C;transform:scaleX(1.0643);">find e</span>
<span class="t" style="left:43.0px;top:312px;font-size:14.6px;color:#0C0C0C;transform:scaleX(1.0331);">Favorites</span>
<span class="t" style="left:43.0px;top:347px;font-size:14.6px;color:#0C0C0C;transform:scaleX(1.0514);">Available</span>
<span class="t" style="left:66.0px;top:379px;font-size:14.6px;color:#0C0C0C;transform:scaleX(1.0581);">UI Automation</span>
<span class="t" style="left:90.0px;top:412px;font-size:14.6px;color:#0C0C0C;transform:scaleX(1.0085);">Element</span>
<span class="t" style="left:114.0px;top:444px;font-size:14.6px;color:#0C0C0C;transform:scaleX(0.9510);">Find</span>
<span class="t" style="left:164.0px;top:477px;font-size:14.6px;color:#F8682E;transform:scaleX(0.9908);">Find E</span>
<span class="t" style="left:206.2px;top:477px;font-size:14.6px;color:#0C0C0C;transform:scaleX(1.0454);">lement</span>
<span class="t" style="left:43.0px;top:788px;font-size:14.6px;color:#1E7ACB;transform:scaleX(1.0421);">Activities</span>
<span class="t" style="left:144.0px;top:788px;font-size:14.6px;color:#444;transform:scaleX(1.0088);">Library</span>
<span class="t" style="left:230.0px;top:788px;font-size:14.6px;color:#444;transform:scaleX(1.0127);">Project</span>
<span class="t" style="left:9.0px;top:822px;font-size:14.6px;color:#444;transform:scaleX(1.0499);">Output</span>
<span class="t" style="left:418.8px;top:213px;font-size:14.6px;color:#5E5E5E;transform:scaleX(0.9793);">Anchor Base*</span>
<span class="t" style="left:393.0px;top:245px;font-size:14.6px;color:#0C0C0C;transform:scaleX(0.9472);">Anchor_Base</span>
<span class="t" style="left:1063.0px;top:244px;font-size:14.6px;color:#0C0C0C;transform:scaleX(1.0150);">Expand All</span>
<span class="t" style="left:1146.0px;top:244px;font-size:14.6px;color:#0C0C0C;transform:scaleX(1.0227);">Collapse All</span>
<span class="t" style="left:485.0px;top:349px;font-size:14.6px;color:#0C0C0C;transform:scaleX(0.9990);">sample</span>
<span class="t" style="left:499.0px;top:441px;font-size:14.6px;color:#0C0C0C;transform:scaleX(0.9884);">Anchor base</span>
<span class="t" style="left:391.0px;top:787px;font-size:14.6px;color:#0C0C0C;transform:scaleX(1.0039);">Variables</span>
<span class="t" style="left:473.0px;top:787px;font-size:14.6px;color:#0C0C0C;transform:scaleX(1.0201);">Arguments</span>
<span class="t" style="left:566.0px;top:787px;font-size:14.6px;color:#0C0C0C;transform:scaleX(1.0482);">Imports</span>
<span class="t" style="left:1071.0px;top:787px;font-size:14.6px;color:#0C0C0C;transform:scaleX(0.9644);">100%</span>
<span class="t" style="left:1248.0px;top:214px;font-size:14.6px;color:#444;transform:scaleX(1.0073);">Properties</span>
<span class="t" style="left:1264.0px;top:277px;font-size:14.6px;color:#0C0C0C;transform:scaleX(1.0304);-webkit-text-stroke:0.42px #0C0C0C">Common</span>
<span class="t" style="left:1264.0px;top:360px;font-size:14.6px;color:#0C0C0C;transform:scaleX(1.1088);-webkit-text-stroke:0.42px #0C0C0C">Input</span>
<span class="t" style="left:1264.0px;top:564px;font-size:14.6px;color:#0C0C0C;transform:scaleX(1.0333);-webkit-text-stroke:0.42px #0C0C0C">Misc</span>
<span class="t" style="left:1264.0px;top:618px;font-size:14.6px;color:#0C0C0C;transform:scaleX(1.0537);-webkit-text-stroke:0.42px #0C0C0C">Options</span>
<span class="t" style="left:1264.0px;top:699px;font-size:14.6px;color:#0C0C0C;transform:scaleX(1.0956);-webkit-text-stroke:0.42px #0C0C0C">Output</span>
<span class="t" style="left:1266.0px;top:306px;font-size:14.6px;color:#0C0C0C;transform:scaleX(0.9970);">ContinueOnError</span>
<span class="t" style="left:1266.0px;top:335px;font-size:14.6px;color:#0C0C0C;transform:scaleX(1.0140);">DisplayName</span>
<span class="t" style="left:1266.0px;top:388px;font-size:14.6px;color:#0C0C0C;transform:scaleX(1.0108);">Target</span>
<span class="t" style="left:1283.0px;top:416px;font-size:14.6px;color:#0C0C0C;transform:scaleX(1.0406);">ClippingRegion</span>
<span class="t" style="left:1283.0px;top:446px;font-size:14.6px;color:#0C0C0C;transform:scaleX(1.0085);">Element</span>
<span class="t" style="left:1283.0px;top:477px;font-size:14.6px;color:#0C0C0C;transform:scaleX(1.0085);">Selector</span>
<span class="t" style="left:1283.0px;top:508px;font-size:14.6px;color:#0C0C0C;transform:scaleX(1.0124);">TimeoutMS</span>
<span class="t" style="left:1283.0px;top:538px;font-size:14.6px;color:#0C0C0C;transform:scaleX(0.9813);">WaitForReady</span>
<span class="t" style="left:1266.0px;top:592px;font-size:14.6px;color:#0C0C0C;transform:scaleX(0.9687);">Private</span>
<span class="t" style="left:1266.0px;top:645px;font-size:14.6px;color:#0C0C0C;transform:scaleX(1.0235);">WaitActive</span>
<span class="t" style="left:1266.0px;top:673px;font-size:14.6px;color:#0C0C0C;transform:scaleX(1.0228);">WaitVisible</span>
<span class="t" style="left:1266.0px;top:728px;font-size:14.6px;color:#0C0C0C;transform:scaleX(0.9903);">FoundElement</span>
<span class="t" style="left:1489.0px;top:387px;font-size:14.6px;color:#0C0C0C;transform:scaleX(1.0108);">Target</span>
<span class="t" style="left:1489.0px;top:537px;font-size:14.6px;color:#0C0C0C;transform:scaleX(0.9016);">INTERACTIVE</span>
<span class="t" style="left:800.8px;top:14px;font-size:14.6px;color:#fff;transform:scaleX(0.9335);">UiPath</span>
<span class="t" style="left:846.8px;top:14px;font-size:14.6px;color:#fff;transform:scaleX(1.0123);">Studio</span>
<span class="t" style="left:893.8px;top:14px;font-size:14.6px;color:#fff;transform:scaleX(1.0163);">Community</span>
<span class="t" style="left:974.2px;top:14px;font-size:14.6px;color:#fff;transform:scaleX(0.9846);">-</span>
<span class="t" style="left:984.4px;top:14px;font-size:14.6px;color:#fff;transform:scaleX(0.9392);">test</span>
<span class="t" style="left:1520.2px;top:57px;font-size:12.8px;color:#7F7F7F;transform:scaleX(0.9298);font-style:italic">Universal</span>
<span class="t" style="left:1574.5px;top:57px;font-size:12.8px;color:#7F7F7F;transform:scaleX(0.8755);font-style:italic">Search</span>
<span class="t" style="left:1616.0px;top:57px;font-size:12.8px;color:#7F7F7F;transform:scaleX(0.9432);font-style:italic">(Ctrl</span>
<span class="t" style="left:1644.67px;top:57px;font-size:12.8px;color:#7F7F7F;transform:scaleX(0.9300);font-style:italic">+</span>
<span class="t" style="left:1655.63px;top:57px;font-size:12.8px;color:#7F7F7F;transform:scaleX(0.9300);font-style:italic">F)</span>
<span class="t" style="left:1489.5px;top:333px;font-size:14.6px;color:#0C0C0C;transform:scaleX(0.9334);">Find</span>
<span class="t" style="left:1522.0px;top:333px;font-size:14.6px;color:#0C0C0C;transform:scaleX(0.9823);">Element</span>
<span class="t" style="left:1579.5px;top:333px;font-size:14.6px;color:#0C0C0C;transform:scaleX(0.9124);">&#x27;INPUT</span>
<span class="t" style="left:1631.1px;top:333px;font-size:14.6px;color:#0C0C0C;transform:scaleX(1.0048);">srchbtn&#x27;</span>
<span class="t" style="left:518.0px;top:513px;font-size:14.6px;color:#0C0C0C;transform:scaleX(0.9334);">Find</span>
<span class="t" style="left:550.5px;top:513px;font-size:14.6px;color:#0C0C0C;transform:scaleX(0.9823);">Element</span>
<span class="t" style="left:608.0px;top:513px;font-size:14.6px;color:#0C0C0C;transform:scaleX(0.9124);">&#x27;INPUT</span>
<span class="t" style="left:659.6px;top:513px;font-size:14.6px;color:#0C0C0C;transform:scaleX(1.0048);">srchbtn&#x27;</span>
<span class="t" style="left:939.4px;top:568px;font-size:14.6px;color:#6E6E6E;transform:scaleX(1.0114);font-style:italic">Drop</span>
<span class="t" style="left:976.4px;top:568px;font-size:14.6px;color:#6E6E6E;transform:scaleX(1.0626);font-style:italic">Action</span>
<span class="t" style="left:1023.3px;top:568px;font-size:14.6px;color:#6E6E6E;transform:scaleX(1.0840);font-style:italic">Activity</span>
<span class="t" style="left:1078.4px;top:568px;font-size:14.6px;color:#6E6E6E;transform:scaleX(0.9671);font-style:italic">Here</span>
<span class="t" style="left:1245.9px;top:244px;font-size:14.6px;color:#0C0C0C;transform:scaleX(0.9319);">UiPath.</span>
<span class="t" style="left:1291.3px;top:244px;font-size:14.6px;color:#0C0C0C;transform:scaleX(0.9219);">Core.</span>
<span class="t" style="left:1325.0px;top:244px;font-size:14.6px;color:#0C0C0C;transform:scaleX(1.0237);">Activities.</span>
<span class="t" style="left:1389.0px;top:244px;font-size:14.6px;color:#0C0C0C;transform:scaleX(1.0180);">WaitUiElementAppear</span>
<span class="t" style="left:1494.4px;top:305px;font-size:14.6px;color:#7A7A7A;transform:scaleX(0.9896);font-style:italic">Specifies</span>
<span class="t" style="left:1557.9px;top:305px;font-size:14.6px;color:#7A7A7A;transform:scaleX(1.0270);font-style:italic">to</span>
<span class="t" style="left:1575.3px;top:305px;font-size:14.6px;color:#7A7A7A;transform:scaleX(1.0238);font-style:italic">continue</span>
<span class="t" style="left:1636.7px;top:305px;font-size:14.6px;color:#7A7A7A;transform:scaleX(1.0051);font-style:italic">executing</span>
<span class="t" style="left:1705.1px;top:305px;font-size:14.6px;color:#7A7A7A;transform:scaleX(0.9952);font-style:italic">the</span>
<span class="t" style="left:1495.1px;top:445px;font-size:14.6px;color:#7A7A7A;transform:scaleX(0.9401);font-style:italic">Enter</span>
<span class="t" style="left:1532.07px;top:445px;font-size:14.6px;color:#7A7A7A;transform:scaleX(0.9300);font-style:italic">a</span>
<span class="t" style="left:1545.12px;top:445px;font-size:14.6px;color:#7A7A7A;transform:scaleX(0.8400);font-style:italic">VB</span>
<span class="t" style="left:1566.9px;top:445px;font-size:14.6px;color:#7A7A7A;transform:scaleX(0.9847);font-style:italic">expression</span>
<span class="t" style="left:1495.1px;top:507px;font-size:14.6px;color:#7A7A7A;transform:scaleX(0.9401);font-style:italic">Enter</span>
<span class="t" style="left:1532.07px;top:507px;font-size:14.6px;color:#7A7A7A;transform:scaleX(0.9300);font-style:italic">a</span>
<span class="t" style="left:1545.12px;top:507px;font-size:14.6px;color:#7A7A7A;transform:scaleX(0.8400);font-style:italic">VB</span>
<span class="t" style="left:1566.9px;top:507px;font-size:14.6px;color:#7A7A7A;transform:scaleX(0.9847);font-style:italic">expression</span>
<span class="t" style="left:1493.7px;top:477px;font-size:14.6px;color:#0C0C0C;transform:scaleX(1.0804);">&quot;&lt;html</span>
<span class="t" style="left:1543.2px;top:477px;font-size:14.6px;color:#0C0C0C;transform:scaleX(1.0479);">title=&#x27;Yahoo!</span>
<span class="t" style="left:1631.1px;top:477px;font-size:14.6px;color:#0C0C0C;transform:scaleX(0.9600);">JAPAN&#x27;</span>
<span class="t" style="left:1682.0px;top:477px;font-size:14.6px;color:#0C0C0C;transform:scaleX(1.1241);">/&gt;&lt;we</span>
<span class="t" style="left:1495.8px;top:727px;font-size:14.6px;color:#7A7A7A;transform:scaleX(0.8586);font-style:italic">The</span>
<span class="t" style="left:1522.6px;top:727px;font-size:14.6px;color:#7A7A7A;transform:scaleX(1.0238);font-style:italic">found</span>
<span class="t" style="left:1565.36px;top:727px;font-size:14.6px;color:#7A7A7A;transform:scaleX(0.9300);font-style:italic">UI</span>
<span class="t" style="left:1583.7px;top:727px;font-size:14.6px;color:#7A7A7A;transform:scaleX(0.9967);font-style:italic">element.</span>
<span class="t" style="left:1645.0px;top:727px;font-size:14.6px;color:#7A7A7A;transform:scaleX(0.9138);font-style:italic">This</span>
<span class="t" style="left:1675.1px;top:727px;font-size:14.6px;color:#7A7A7A;transform:scaleX(1.0679);font-style:italic">field</span>
<span class="t" style="left:1707.33px;top:727px;font-size:14.6px;color:#7A7A7A;transform:scaleX(0.9300);font-style:italic">su</span>
<span class="t" style="left:1721.8px;top:727px;font-size:14.6px;color:#7A7A7A;transform:scaleX(0.9354);font-style:italic;clip-path:inset(0 26% 0 0)">p</span>
</div></body></html>
